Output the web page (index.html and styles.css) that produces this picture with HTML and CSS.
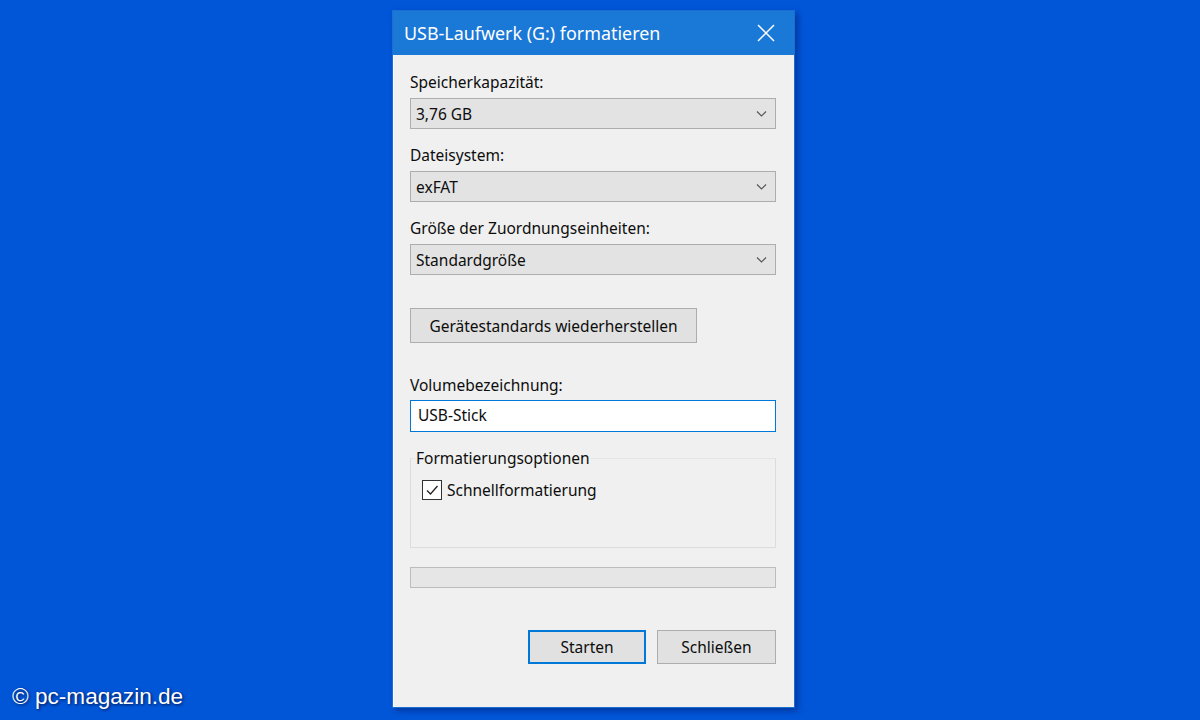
FILE: index.html
```html
<!DOCTYPE html>
<html lang="de">
<head>
<meta charset="utf-8">
<title>USB-Laufwerk (G:) formatieren</title>
<link rel="stylesheet" href="styles.css">
</head>
<body>
<div class="desktop">
  <div class="dialog">
    <div class="titlebar">
      <span class="title">USB-Laufwerk (G:) formatieren</span>
      <svg class="close" width="18" height="18" viewBox="0 0 18 18"><path d="M1 1L17 17M17 1L1 17" stroke="#fff" stroke-width="1.5" fill="none"/></svg>
    </div>
    <div class="content">
      <label class="lbl">Speicherkapazität:</label>
      <div class="combo"><span>3,76 GB</span><svg class="chev" width="11" height="7" viewBox="0 0 11 7"><path d="M1 1.5L5.5 6L10 1.5" stroke="#555" stroke-width="1.1" fill="none"/></svg></div>
      <label class="lbl">Dateisystem:</label>
      <div class="combo"><span>exFAT</span><svg class="chev" width="11" height="7" viewBox="0 0 11 7"><path d="M1 1.5L5.5 6L10 1.5" stroke="#555" stroke-width="1.1" fill="none"/></svg></div>
      <label class="lbl">Größe der Zuordnungseinheiten:</label>
      <div class="combo"><span>Standardgröße</span><svg class="chev" width="11" height="7" viewBox="0 0 11 7"><path d="M1 1.5L5.5 6L10 1.5" stroke="#555" stroke-width="1.1" fill="none"/></svg></div>
      <button class="btn restore">Gerätestandards wiederherstellen</button>
      <label class="lbl vol">Volumebezeichnung:</label>
      <div class="input">USB-Stick</div>
      <fieldset class="group">
        <legend>Formatierungsoptionen</legend>
        <div class="check">
          <span class="box"><svg width="16" height="16" viewBox="0 0 16 16"><path d="M3 8.5L6.5 12L13.5 4" stroke="#222" stroke-width="1.3" fill="none"/></svg></span>
          <span>Schnellformatierung</span>
        </div>
      </fieldset>
      <div class="progress"></div>
      <div class="actions">
        <button class="btn default">Starten</button>
        <button class="btn">Schließen</button>
      </div>
    </div>
  </div>
  <div class="watermark">© pc-magazin.de</div>
</div>
</body>
</html>
```
FILE: styles.css
```css
html, body {
  margin: 0;
  padding: 0;
  width: 1200px;
  height: 720px;
  overflow: hidden;
  background: #0156d8;
}
.desktop {
  position: relative;
  width: 1200px;
  height: 720px;
  padding: 10px 0 0 392px;
  box-sizing: border-box;
  font-family: "Noto Sans", "Open Sans", sans-serif;
}
.dialog {
  width: 403px;
  height: 698px;
  box-sizing: border-box;
  border: 1px solid #1c6fd0;
  background: #f0f0f0;
  display: flex;
  flex-direction: column;
  box-shadow: 3px 3px 6px rgba(0, 20, 90, 0.45);
}
.titlebar {
  height: 44px;
  flex: none;
  background: #1a78d6;
  display: flex;
  align-items: center;
  justify-content: space-between;
  padding: 0 19px 0 11px;
  color: #fff;
}
.title {
  font-size: 17.9px;
}
.close {
  display: block;
}
.content {
  flex: 1;
  padding: 17px 18px 0 16px;
  display: flex;
  flex-direction: column;
  color: #0d0d0d;
  font-size: 15.5px;
  border-left: 1px solid #fbfbfb;
}
.lbl {
  display: block;
  height: 20px;
  line-height: 20px;
  margin-bottom: 6px;
}
.combo {
  height: 31px;
  box-sizing: border-box;
  border: 1px solid #adadad;
  background: #e3e3e3;
  display: flex;
  align-items: center;
  justify-content: space-between;
  padding: 0 8px 0 5px;
  margin-bottom: 16px;
}
.chev {
  display: block;
}
.btn {
  font: inherit;
  color: #0d0d0d;
  background: #e1e1e1;
  border: 1px solid #adadad;
  height: 35px;
  padding: 0;
  cursor: default;
}
.restore {
  align-self: flex-start;
  width: 287px;
  margin-top: 17px;
  margin-bottom: 32px;
}
.vol {
  margin-bottom: 5px;
}
.input {
  height: 32px;
  box-sizing: border-box;
  border: 1px solid #0078d7;
  background: #fff;
  padding: 0 7px;
  line-height: 28px;
}
.group {
  margin: 15px 0 0 0;
  padding: 10px 11px 0 11px;
  height: 101px;
  box-sizing: border-box;
  border: 1px solid #dcdcdc;
  border-top-color: #e4e4e4;
}
.group legend {
  padding: 0 1px;
  margin-left: -7px;
}
.check {
  display: flex;
  align-items: center;
  gap: 5px;
  height: 22px;
}
.box {
  width: 20px;
  height: 20px;
  box-sizing: border-box;
  border: 1px solid #333;
  background: #fff;
  display: flex;
  align-items: center;
  justify-content: center;
}
.box svg {
  display: block;
}
.progress {
  margin-top: 19px;
  height: 21px;
  box-sizing: border-box;
  border: 1px solid #bcbcbc;
  background: #e6e6e6;
}
.actions {
  display: flex;
  justify-content: flex-end;
  gap: 11px;
  margin-top: 42px;
}
.actions .btn {
  width: 119px;
  height: 34px;
}
.actions .default {
  border: 2px solid #0078d7;
  width: 118px;
}
.watermark {
  position: absolute;
  left: 12px;
  top: 684px;
  color: #fff;
  font-family: "Liberation Sans", Arial, sans-serif;
  font-size: 22.6px;
  text-shadow: 1px 1px 3px rgba(0, 0, 40, 0.8);
}
```
